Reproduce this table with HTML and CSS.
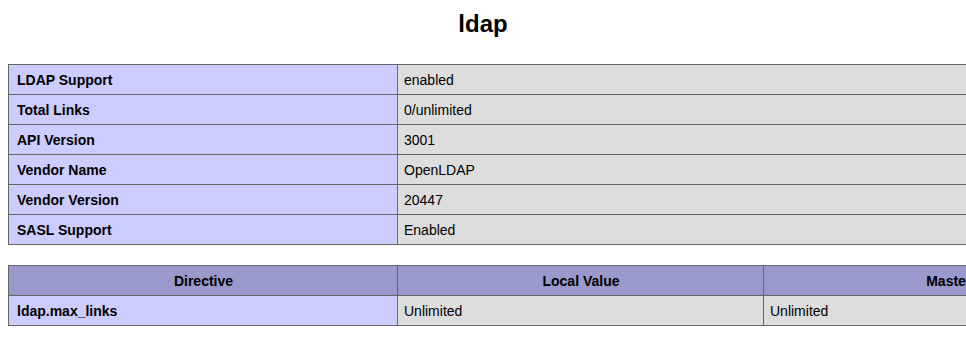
FILE: index.html
```html
<!DOCTYPE html>
<html>
<head>
<meta charset="utf-8">
<title>ldap</title>
<link rel="stylesheet" href="styles.css">
</head>
<body>
<div class="page">
  <h2 class="title">ldap</h2>
  <table class="info">
    <colgroup><col class="c1"><col class="c2"></colgroup>
    <tr><td class="e">LDAP Support</td><td class="v">enabled</td></tr>
    <tr><td class="e">Total Links</td><td class="v">0/unlimited</td></tr>
    <tr><td class="e">API Version</td><td class="v">3001</td></tr>
    <tr><td class="e">Vendor Name</td><td class="v">OpenLDAP</td></tr>
    <tr><td class="e">Vendor Version</td><td class="v">20447</td></tr>
    <tr><td class="e">SASL Support</td><td class="v">Enabled</td></tr>
  </table>
  <table class="info directives">
    <colgroup><col class="c1"><col class="c2b"><col class="c3"></colgroup>
    <tr class="h"><th>Directive</th><th>Local Value</th><th>Master Value</th></tr>
    <tr><td class="e">ldap.max_links</td><td class="v">Unlimited</td><td class="v">Unlimited</td></tr>
  </table>
</div>
</body>
</html>
```
FILE: styles.css
```css
html, body {
  margin: 0;
  padding: 0;
  background: #fff;
}
body {
  font-family: "Liberation Sans", Arial, sans-serif;
  font-size: 14px;
  color: #000;
}
.page {
  padding: 10px 8px 0 8px;
}
.title {
  margin: 0 0 27px 0;
  font-size: 24px;
  line-height: 27px;
  font-weight: bold;
  text-align: center;
}
.info {
  border-collapse: collapse;
  table-layout: fixed;
  width: 1166px;
  margin: 0 0 20px 0;
}
.c1 { width: 389px; }
.c2b { width: 366px; }
.info td, .info th {
  border: 1px solid #666;
  padding: 7px 7px 6px 8px;
  line-height: 16px;
  font-size: 14px;
  vertical-align: middle;
  white-space: nowrap;
  overflow: hidden;
}
.e {
  background-color: #ccf;
  font-weight: bold;
  text-align: left;
}
.info td.v {
  background-color: #ddd;
  text-align: left;
  padding-left: 6px;
}
.h th {
  background-color: #99c;
  font-weight: bold;
  text-align: center;
}
```
